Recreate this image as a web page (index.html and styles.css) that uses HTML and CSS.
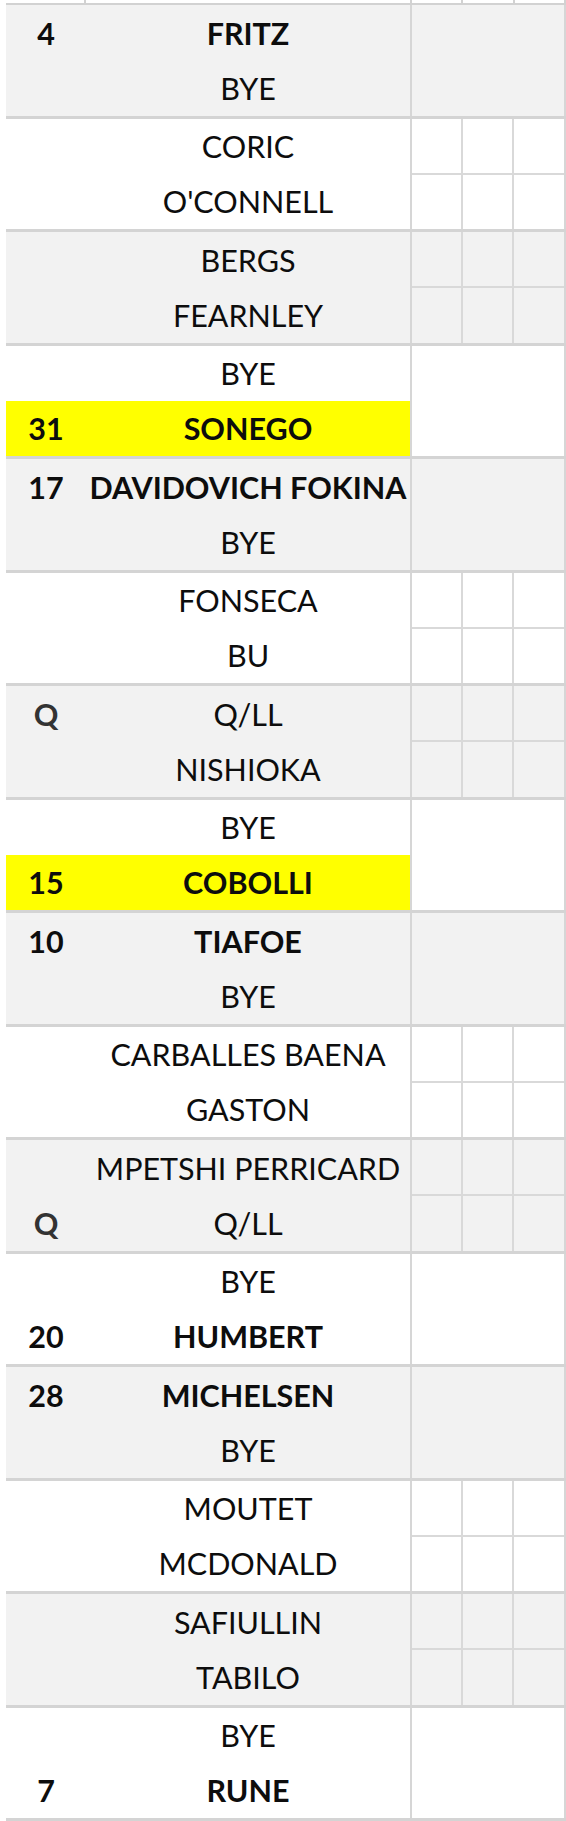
FILE: index.html
```html
<!DOCTYPE html>
<html lang="en">
<head>
<meta charset="utf-8">
<title>Draw</title>
<link rel="stylesheet" href="styles.css">
</head>
<body>
<div class="draw">
  <div class="top-strip">
    <span class="tick tick-seed"></span>
    <span class="tick tick-name"></span>
    <span class="tick tick-s1"></span>
    <span class="tick tick-s2"></span>
    <span class="tick tick-s3"></span>
  </div>

  <section class="group alt">
    <div class="players">
      <div class="row"><span class="seed">4</span><span class="name strong">FRITZ</span></div>
      <div class="row"><span class="seed"></span><span class="name">BYE</span></div>
    </div>
    <div class="scores merged"></div>
  </section>

  <section class="group">
    <div class="players">
      <div class="row"><span class="seed"></span><span class="name">CORIC</span></div>
      <div class="row"><span class="seed"></span><span class="name">O'CONNELL</span></div>
    </div>
    <div class="scores match"><i></i><i></i><i></i><i></i><i></i><i></i></div>
  </section>

  <section class="group alt">
    <div class="players">
      <div class="row"><span class="seed"></span><span class="name">BERGS</span></div>
      <div class="row"><span class="seed"></span><span class="name">FEARNLEY</span></div>
    </div>
    <div class="scores match"><i></i><i></i><i></i><i></i><i></i><i></i></div>
  </section>

  <section class="group">
    <div class="players">
      <div class="row"><span class="seed"></span><span class="name">BYE</span></div>
      <div class="row hl"><span class="seed">31</span><span class="name strong">SONEGO</span></div>
    </div>
    <div class="scores merged"></div>
  </section>

  <section class="group alt">
    <div class="players">
      <div class="row"><span class="seed">17</span><span class="name strong">DAVIDOVICH FOKINA</span></div>
      <div class="row"><span class="seed"></span><span class="name">BYE</span></div>
    </div>
    <div class="scores merged"></div>
  </section>

  <section class="group">
    <div class="players">
      <div class="row"><span class="seed"></span><span class="name">FONSECA</span></div>
      <div class="row"><span class="seed"></span><span class="name">BU</span></div>
    </div>
    <div class="scores match"><i></i><i></i><i></i><i></i><i></i><i></i></div>
  </section>

  <section class="group alt">
    <div class="players">
      <div class="row"><span class="seed muted">Q</span><span class="name">Q/LL</span></div>
      <div class="row"><span class="seed"></span><span class="name">NISHIOKA</span></div>
    </div>
    <div class="scores match"><i></i><i></i><i></i><i></i><i></i><i></i></div>
  </section>

  <section class="group">
    <div class="players">
      <div class="row"><span class="seed"></span><span class="name">BYE</span></div>
      <div class="row hl"><span class="seed">15</span><span class="name strong">COBOLLI</span></div>
    </div>
    <div class="scores merged"></div>
  </section>

  <section class="group alt">
    <div class="players">
      <div class="row"><span class="seed">10</span><span class="name strong">TIAFOE</span></div>
      <div class="row"><span class="seed"></span><span class="name">BYE</span></div>
    </div>
    <div class="scores merged"></div>
  </section>

  <section class="group">
    <div class="players">
      <div class="row"><span class="seed"></span><span class="name">CARBALLES BAENA</span></div>
      <div class="row"><span class="seed"></span><span class="name">GASTON</span></div>
    </div>
    <div class="scores match"><i></i><i></i><i></i><i></i><i></i><i></i></div>
  </section>

  <section class="group alt">
    <div class="players">
      <div class="row"><span class="seed"></span><span class="name">MPETSHI PERRICARD</span></div>
      <div class="row"><span class="seed muted">Q</span><span class="name">Q/LL</span></div>
    </div>
    <div class="scores match"><i></i><i></i><i></i><i></i><i></i><i></i></div>
  </section>

  <section class="group">
    <div class="players">
      <div class="row"><span class="seed"></span><span class="name">BYE</span></div>
      <div class="row"><span class="seed">20</span><span class="name strong">HUMBERT</span></div>
    </div>
    <div class="scores merged"></div>
  </section>

  <section class="group alt">
    <div class="players">
      <div class="row"><span class="seed">28</span><span class="name strong">MICHELSEN</span></div>
      <div class="row"><span class="seed"></span><span class="name">BYE</span></div>
    </div>
    <div class="scores merged"></div>
  </section>

  <section class="group">
    <div class="players">
      <div class="row"><span class="seed"></span><span class="name">MOUTET</span></div>
      <div class="row"><span class="seed"></span><span class="name">MCDONALD</span></div>
    </div>
    <div class="scores match"><i></i><i></i><i></i><i></i><i></i><i></i></div>
  </section>

  <section class="group alt">
    <div class="players">
      <div class="row"><span class="seed"></span><span class="name">SAFIULLIN</span></div>
      <div class="row"><span class="seed"></span><span class="name">TABILO</span></div>
    </div>
    <div class="scores match"><i></i><i></i><i></i><i></i><i></i><i></i></div>
  </section>

  <section class="group">
    <div class="players">
      <div class="row"><span class="seed"></span><span class="name">BYE</span></div>
      <div class="row"><span class="seed">7</span><span class="name strong">RUNE</span></div>
    </div>
    <div class="scores merged"></div>
  </section>
</div>
</body>
</html>
```

FILE: styles.css
```css
* { box-sizing: border-box; }

html, body {
  margin: 0;
  padding: 0;
  background: #ffffff;
}

body {
  font-family: Lato, "Open Sans", "Liberation Sans", sans-serif;
  font-size: 30.5px;
  color: #0d0d0d;
}

.draw {
  padding-left: 6px;
  width: 566px;
}

.top-strip {
  position: relative;
  height: 5px;
  border-bottom: 2px solid #d2d2d2;
}

.tick {
  position: absolute;
  top: 0;
  width: 2px;
  height: 3px;
  background: #d2d2d2;
}
.tick-seed { left: 78px; }
.tick-name { left: 404px; }
.tick-s1 { left: 455px; }
.tick-s2 { left: 507px; }
.tick-s3 { left: 558px; }

.group {
  display: flex;
  height: 113.5px;
  border-bottom: 3px solid #d4d4d4;
  background: #ffffff;
}

.group.alt {
  background: #f2f2f2;
}

.players {
  width: 404px;
  display: flex;
  flex-direction: column;
}

.row {
  flex: 1;
  display: grid;
  grid-template-columns: 80px 1fr;
  align-items: center;
}

.row.hl {
  background: #ffff00;
}

.seed {
  text-align: center;
  font-weight: 700;
  color: #0d0d0d;
}

.seed.muted {
  color: #333333;
}

.name {
  text-align: center;
  white-space: nowrap;
}

.name.strong {
  font-weight: 700;
}

.scores {
  flex: 1;
  border-left: 2px solid #d6d6d6;
  border-right: 2px solid #d6d6d6;
}

.scores.match {
  display: grid;
  grid-template-columns: 49px 49px 1fr;
  grid-template-rows: 1fr 1fr;
  gap: 2px;
  background: #d9d9d9;
}

.scores.match i {
  background: #ffffff;
}

.group.alt .scores.match i {
  background: #f2f2f2;
}
```
